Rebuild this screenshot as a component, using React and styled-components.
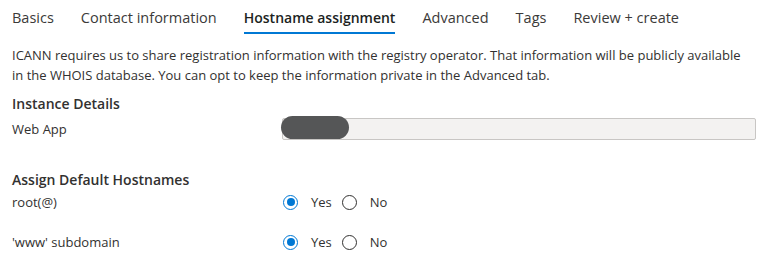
import React, { useState } from "react";
import styled, { createGlobalStyle } from "styled-components";

const GlobalStyle = createGlobalStyle`
  body {
    margin: 0;
    background: #ffffff;
    font-family: "Open Sans", "Noto Sans", sans-serif;
    color: #323130;
  }
`;

const Page = styled.div`
  width: 768px;
  height: 263px;
  overflow: hidden;
  background: #ffffff;
`;

const TabBar = styled.div`
  display: flex;
  gap: 27px;
  padding: 0 12px;
  height: 34px;
  align-items: flex-start;
`;

const Tab = styled.div`
  padding-top: 8px;
  height: 34px;
  box-sizing: border-box;
  font-size: ${(props) => (props.active ? "14px" : "14.5px")};
  line-height: 19px;
  color: ${(props) => (props.active ? "#201f1e" : "#3b3a39")};
  font-weight: ${(props) => (props.active ? 600 : 400)};
  border-bottom: 2px solid
    ${(props) => (props.active ? "#0078d4" : "transparent")};
`;

const Body = styled.div`
  padding: 11px 12px 0;
`;

const Intro = styled.p`
  margin: 0;
  padding-right: 12px;
  font-size: 13px;
  line-height: 20px;
  color: #323130;
`;

const SectionTitle = styled.h3`
  margin: 0;
  font-size: 14px;
  font-weight: 600;
  line-height: 20px;
  color: #323130;
  margin-top: ${(props) => props.top}px;
`;

const Row = styled.div`
  display: grid;
  grid-template-columns: 270px 1fr;
  align-items: center;
  height: ${(props) => props.height}px;
  margin-top: ${(props) => props.top || 0}px;
`;

const Label = styled.div`
  font-size: 13px;
  color: #323130;
`;

const TextBox = styled.div`
  position: relative;
  height: 22px;
  background: #f3f2f1;
  border: 1px solid #c8c6c4;
  border-radius: 2px;
  box-sizing: border-box;
`;

const Redaction = styled.div`
  position: absolute;
  left: -2px;
  top: -3px;
  width: 68px;
  height: 23px;
  border-radius: 12px;
  background: #555657;
`;

const RadioGroup = styled.div`
  display: flex;
  align-items: center;
  gap: 10px;
  padding-left: 1px;
`;

const RadioOption = styled.label`
  display: flex;
  align-items: center;
  gap: 13px;
  font-size: 13px;
  color: #323130;
  cursor: pointer;
`;

const Circle = styled.span`
  width: 15px;
  height: 15px;
  border-radius: 50%;
  box-sizing: border-box;
  border: 1px solid ${(props) => (props.checked ? "#0078d4" : "#323130")};
  display: flex;
  align-items: center;
  justify-content: center;
  &::after {
    content: "";
    width: 8px;
    height: 8px;
    border-radius: 50%;
    background: ${(props) => (props.checked ? "#0078d4" : "transparent")};
  }
`;

const tabs = [
  "Basics",
  "Contact information",
  "Hostname assignment",
  "Advanced",
  "Tags",
  "Review + create",
];

const YesNo = ({ value, onChange }) => (
  <RadioGroup>
    <RadioOption onClick={() => onChange("yes")}>
      <Circle checked={value === "yes"} />
      Yes
    </RadioOption>
    <RadioOption onClick={() => onChange("no")}>
      <Circle checked={value === "no"} />
      No
    </RadioOption>
  </RadioGroup>
);

const App = () => {
  const [root, setRoot] = useState("yes");
  const [www, setWww] = useState("yes");

  return (
    <Page>
      <GlobalStyle />
      <TabBar>
        {tabs.map((t) => (
          <Tab key={t} active={t === "Hostname assignment"}>
            {t}
          </Tab>
        ))}
      </TabBar>
      <Body>
        <Intro>
          ICANN requires us to share registration information with the registry
          operator. That information will be publicly available in the WHOIS
          database. You can opt to keep the information private in the
          Advanced tab.
        </Intro>
        <SectionTitle top={9}>Instance Details</SectionTitle>
        <Row height={30}>
          <Label>Web App</Label>
          <TextBox>
            <Redaction />
          </TextBox>
        </Row>
        <SectionTitle top={26}>Assign Default Hostnames</SectionTitle>
        <Row height={24}>
          <Label>root(@)</Label>
          <YesNo value={root} onChange={setRoot} />
        </Row>
        <Row height={24} top={16}>
          <Label>'www' subdomain</Label>
          <YesNo value={www} onChange={setWww} />
        </Row>
      </Body>
    </Page>
  );
};

export default App;
